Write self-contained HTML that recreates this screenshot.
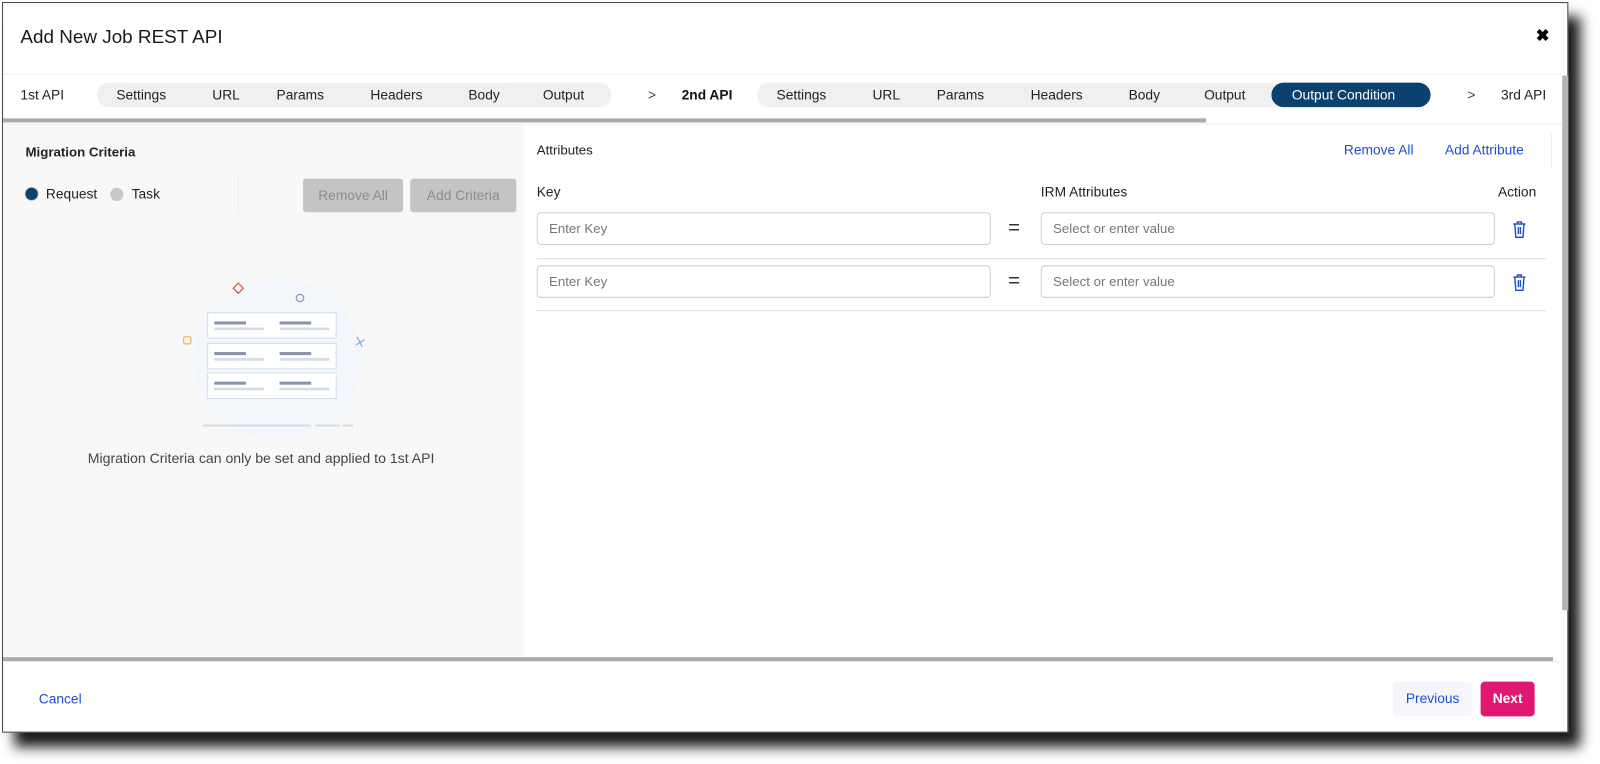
<!DOCTYPE html>
<html><head><meta charset="utf-8"><style>
*{box-sizing:border-box;margin:0;padding:0}
html,body{width:1600px;height:764px;overflow:hidden;background:#fff;font-family:"Liberation Sans",sans-serif}
#w{position:absolute;left:0;top:0;width:1568px;height:749px;transform:scale(1.0204);transform-origin:0 0}
.a{position:absolute;white-space:nowrap}
.dlg{left:2px;top:2px;width:1535px;height:716px;background:#fff;border:1px solid #444;box-shadow:12px 14px 12px rgba(0,0,0,.9)}
.t{font-size:13.5px;color:#222;transform:translateY(-50%)}
.pill{background:#f0f0f0;border-radius:12px;height:24px;top:81px}
.blue{color:#1d4fd6}
.inp{border:1px solid #cfcfcf;border-radius:4px;height:32px;background:#fff}
.ph{font-size:13px;color:#777}
</style></head><body><div id="w">
<div class="a dlg"></div>
<div class="a t" style="left:20px;top:36px;font-size:18.5px;color:#1a1a1a">Add New Job REST API</div>
<div class="a t" style="left:1505px;top:35px;font-size:16px;font-weight:bold;color:#000">✖</div>
<div class="a" style="left:3px;top:72px;width:1528px;height:1px;background:#eee"></div>

<div class="a t" style="left:20px;top:93px">1st API</div>
<div class="a pill" style="left:95px;width:504px"></div>
<div class="a t" style="left:114px;top:93px">Settings</div>
<div class="a t" style="left:208px;top:93px">URL</div>
<div class="a t" style="left:271px;top:93px">Params</div>
<div class="a t" style="left:363px;top:93px">Headers</div>
<div class="a t" style="left:459px;top:93px">Body</div>
<div class="a t" style="left:532px;top:93px">Output</div>
<div class="a t" style="left:635px;top:93px;color:#444">&gt;</div>
<div class="a t" style="left:668px;top:93px;font-weight:bold;color:#111">2nd API</div>
<div class="a pill" style="left:742px;width:660px"></div>
<div class="a t" style="left:761px;top:93px">Settings</div>
<div class="a t" style="left:855px;top:93px">URL</div>
<div class="a t" style="left:918px;top:93px">Params</div>
<div class="a t" style="left:1010px;top:93px">Headers</div>
<div class="a t" style="left:1106px;top:93px">Body</div>
<div class="a t" style="left:1180px;top:93px">Output</div>
<div class="a pill" style="left:1246px;width:156px;background:#0b416f"></div>
<div class="a t" style="left:1266px;top:93px;color:#fff">Output Condition</div>
<div class="a t" style="left:1438px;top:93px;color:#444">&gt;</div>
<div class="a t" style="left:1471px;top:93px">3rd API</div>
<div class="a" style="left:3px;top:116px;width:1179px;height:4px;background:#a9a9a9"></div>
<div class="a" style="left:3px;top:121px;width:1528px;height:1px;background:#eee"></div>
<div class="a" style="left:1531px;top:74px;width:6px;height:524px;background:#b4b4b4"></div>

<div class="a" style="left:3px;top:122px;width:510px;height:521px;background:#f8f8f8"></div>
<div class="a t" style="left:25px;top:149px;font-size:13px;font-weight:bold;color:#222">Migration Criteria</div>
<div class="a" style="left:25px;top:184px;width:12px;height:12px;border-radius:50%;background:#0b416f;box-shadow:0 0 0 1px #ccc"></div>
<div class="a t" style="left:45px;top:190px">Request</div>
<div class="a" style="left:108px;top:184px;width:13px;height:13px;border-radius:50%;background:#c8c8c8"></div>
<div class="a t" style="left:129px;top:190px">Task</div>
<div class="a" style="left:233px;top:170px;width:1px;height:40px;background:#ececec"></div>
<div class="a" style="left:297px;top:175px;width:98px;height:33px;background:#c4c4c4;border-radius:3px;color:#8c8c8c;font-size:13.5px;text-align:center;line-height:33px">Remove All</div>
<div class="a" style="left:402px;top:175px;width:104px;height:33px;background:#c4c4c4;border-radius:3px;color:#8c8c8c;font-size:13.5px;text-align:center;line-height:33px">Add Criteria</div>
<svg class="a" style="left:160px;top:260px" width="220" height="170" viewBox="0 0 220 170">
<ellipse cx="112" cy="92" rx="82" ry="80" fill="#f3f7fc"/>
<rect x="70" y="19" width="7" height="7" transform="rotate(45 73.5 22.5)" fill="none" stroke="#e05a4f" stroke-width="1.3"/>
<circle cx="134" cy="32" r="3.6" fill="none" stroke="#8aa0b8" stroke-width="1.3"/>
<rect x="20" y="70" width="7" height="7" rx="1.5" fill="none" stroke="#f5b55b" stroke-width="1.3"/>
<path d="M197 73l-8 5M190 70l5 10" stroke="#7ea6e0" stroke-width="1.2"/>
<g fill="#fff" stroke="#d3dde9"><rect x="43.5" y="46.5" width="126" height="25"/><rect x="43.5" y="76.5" width="126" height="25"/><rect x="43.5" y="105.5" width="126" height="25"/></g>
<g fill="#8a94aa"><rect x="50" y="55" width="31" height="3"/><rect x="114" y="55" width="31" height="3"/><rect x="50" y="85" width="31" height="3"/><rect x="114" y="85" width="31" height="3"/><rect x="50" y="114" width="31" height="3"/><rect x="114" y="114" width="31" height="3"/></g>
<g fill="#d5dbe4"><rect x="50" y="61" width="49" height="2.5"/><rect x="114" y="61" width="49" height="2.5"/><rect x="50" y="91" width="49" height="2.5"/><rect x="114" y="91" width="49" height="2.5"/><rect x="50" y="120" width="49" height="2.5"/><rect x="114" y="120" width="49" height="2.5"/><rect x="38" y="156" width="106" height="2"/><rect x="149" y="156" width="24" height="2"/><rect x="176" y="156" width="10" height="2"/></g>
</svg>
<div class="a t" style="left:86px;top:449px;font-size:13.8px;color:#444">Migration Criteria can only be set and applied to 1st API</div>

<div class="a t" style="left:526px;top:147px;font-size:13px;color:#222">Attributes</div>
<div class="a t blue" style="left:1317px;top:147px">Remove All</div>
<div class="a t blue" style="left:1416px;top:147px">Add Attribute</div>
<div class="a" style="left:1520px;top:130px;width:1px;height:36px;background:#eee"></div>
<div class="a t" style="left:526px;top:188px">Key</div>
<div class="a t" style="left:1020px;top:188px">IRM Attributes</div>
<div class="a t" style="left:1468px;top:188px">Action</div>

<div class="a inp" style="left:526px;top:208px;width:445px"></div>
<div class="a t ph" style="left:538px;top:224px">Enter Key</div>
<div class="a t" style="left:988px;top:224px;font-size:20px;color:#333">=</div>
<div class="a inp" style="left:1020px;top:208px;width:445px"></div>
<div class="a t ph" style="left:1032px;top:224px">Select or enter value</div>
<svg class="a" style="left:1482px;top:216px" width="14" height="18" viewBox="0 0 14 18"><path d="M1 3.5h12M5 3.5V1.5h4v2M2.5 3.5l1 13h7l1-13M6 6.5v7M8 6.5v7" fill="none" stroke="#1d4fd6" stroke-width="1.4"/></svg>
<div class="a" style="left:526px;top:253px;width:989px;height:1px;background:#ddd"></div>

<div class="a inp" style="left:526px;top:260px;width:445px"></div>
<div class="a t ph" style="left:538px;top:276px">Enter Key</div>
<div class="a t" style="left:988px;top:276px;font-size:20px;color:#333">=</div>
<div class="a inp" style="left:1020px;top:260px;width:445px"></div>
<div class="a t ph" style="left:1032px;top:276px">Select or enter value</div>
<svg class="a" style="left:1482px;top:268px" width="14" height="18" viewBox="0 0 14 18"><path d="M1 3.5h12M5 3.5V1.5h4v2M2.5 3.5l1 13h7l1-13M6 6.5v7M8 6.5v7" fill="none" stroke="#1d4fd6" stroke-width="1.4"/></svg>
<div class="a" style="left:526px;top:304px;width:989px;height:1px;background:#ddd"></div>

<div class="a" style="left:3px;top:644px;width:1519px;height:4px;background:#aaa"></div>
<div class="a" style="left:3px;top:648px;width:1528px;height:1px;background:#eee"></div>
<div class="a t blue" style="left:38px;top:685px">Cancel</div>
<div class="a" style="left:1365px;top:668px;width:78px;height:34px;background:#f4f6fb;border-radius:4px;color:#1d4fd6;font-size:13.5px;text-align:center;line-height:34px">Previous</div>
<div class="a" style="left:1451px;top:668px;width:53px;height:34px;background:#e0186f;border-radius:4px;color:#fff;font-size:13.5px;font-weight:bold;text-align:center;line-height:34px">Next</div>
</div></body></html>
